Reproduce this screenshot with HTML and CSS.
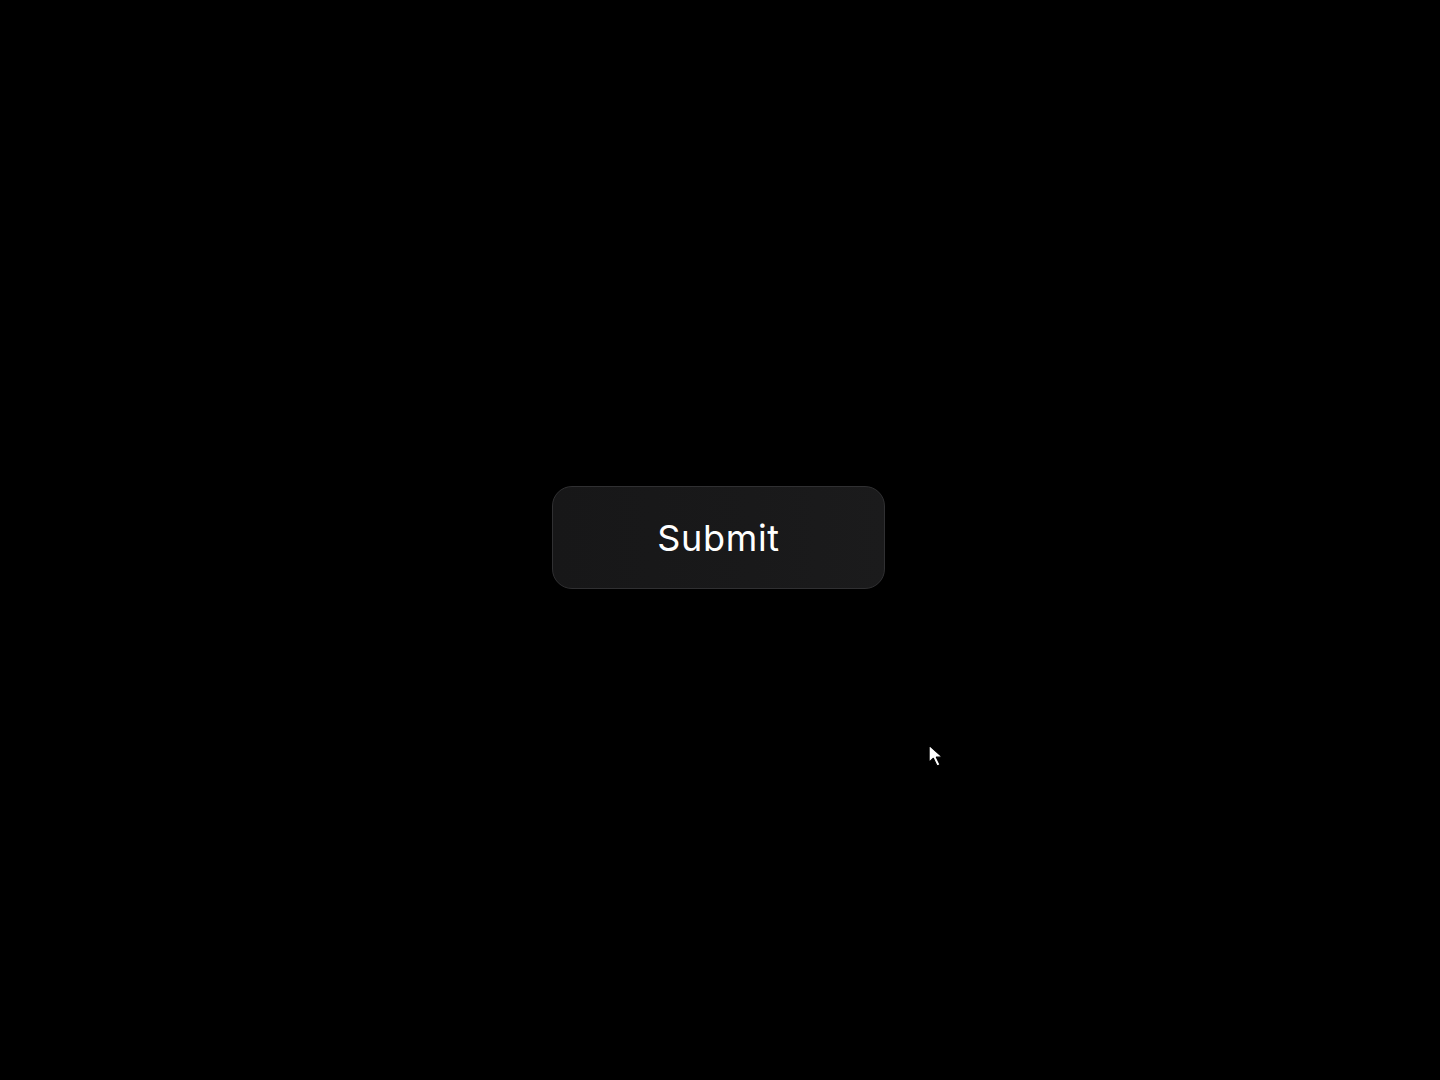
FILE: index.html
```html
<!DOCTYPE html>
<html lang="en">
<head>
<meta charset="utf-8">
<title>Submit</title>
<link rel="stylesheet" href="styles.css">
</head>
<body>
<main class="stage">
  <button class="submit-btn" type="button">Submit</button>
</main>
<svg class="cursor" width="20" height="25" viewBox="0 0 18 22" aria-hidden="true">
  <path d="M1 1 L1 16 L4.8 12.6 L8.2 19.6 L10.8 18.4 L7.5 11.6 L12.6 11.4 Z" fill="#fff" stroke="#000" stroke-width="1" stroke-linejoin="round"/>
</svg>
</body>
</html>
```
FILE: styles.css
```css
html, body {
  margin: 0;
  padding: 0;
  background: #000;
  height: 1080px;
  overflow: hidden;
}
.stage {
  width: 1437px;
  height: 1075px;
  display: flex;
  align-items: center;
  justify-content: center;
}
.submit-btn {
  width: 333px;
  height: 103px;
  box-sizing: border-box;
  border: 1px solid #303032;
  border-radius: 20px;
  background: linear-gradient(90deg, #171718 0%, #19191a 60%, #1b1b1c 100%);
  color: #fff;
  font-family: Inter, "Liberation Sans", sans-serif;
  font-size: 36px;
  font-weight: 400;
  letter-spacing: 0.7px;
  padding: 0;
  cursor: default;
}
.cursor {
  position: absolute;
  left: 928px;
  top: 744px;
}
```
